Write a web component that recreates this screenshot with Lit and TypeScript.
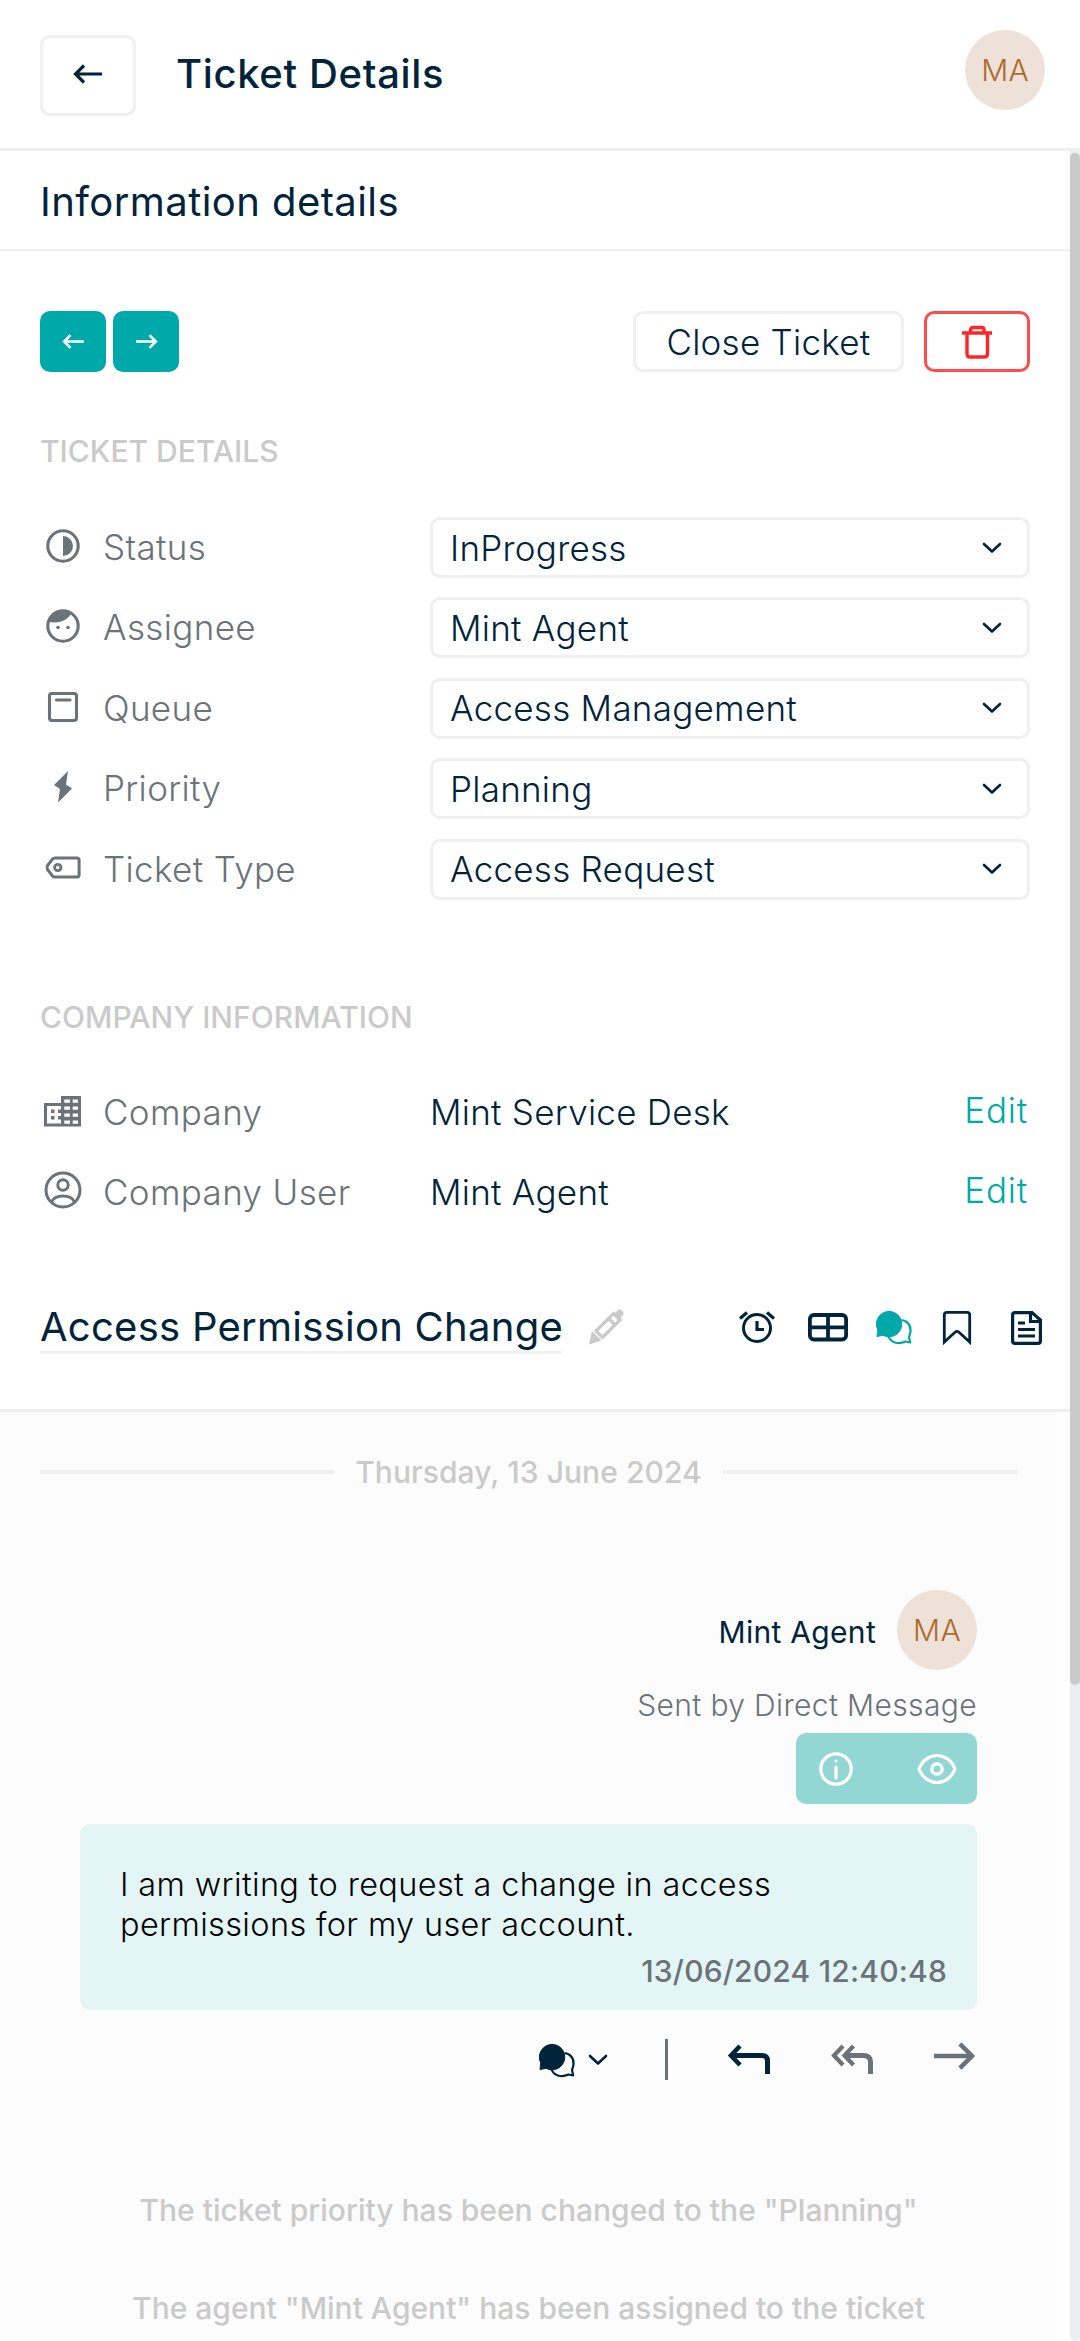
import { LitElement, html, css, svg } from "lit";
import { customElement } from "lit/decorators.js";

const arrow = (w: number, h: number, sw: number, flip = false) => html`<svg width=${w} height=${h} viewBox="0 0 28 20" fill="none" stroke="currentColor" stroke-width=${sw}>
  ${flip ? svg`<path d="M0 10H26M18 1.500L26.500 10L18 18.500"/>` : svg`<path d="M28 10H2M10 1.500L1.500 10L10 18.500"/>`}</svg>`;
const chevron = html`<svg class="chevron" width="20" height="12" viewBox="0 0 20 12" fill="none" stroke="currentColor" stroke-width="2.600" stroke-linecap="round" stroke-linejoin="round"><path d="M2 2L10 9.500L18 2"/></svg>`;
const bubbles = html`<svg class="bubbles" width="36" height="34" viewBox="0 0 36 34" fill="none">
  <path d="M25.500 9C31 9.500 35 14 34.500 20C34.500 22.500 33.500 24.500 33 26L34.200 31.500L29.500 30.500C22 34 14.500 31.500 12 24.500" stroke="currentColor" stroke-width="2.200" stroke-linejoin="round"/>
  <path d="M1 25.500L1.800 19A12.700 12.700 0 1 1 7 24.300Z" fill="currentColor" stroke="currentColor" stroke-linejoin="round"/></svg>`;
const icons: Record<string, unknown> = {
  status: svg`<circle cx="20" cy="20" r="15.200" stroke="currentColor" stroke-width="3.100"/><path d="M20 10A10 10 0 0 1 20 30Z" fill="currentColor"/>`,
  face: svg`<circle cx="20" cy="20" r="15.200" stroke="currentColor" stroke-width="3.100"/><path d="M5 15.500C12 17.500 22 17 28 8C22 2.500 9 2.500 5 15.500Z" fill="currentColor"/><circle cx="15" cy="21.500" r="1.800" fill="currentColor"/><circle cx="25" cy="21.500" r="1.800" fill="currentColor"/>`,
  queue: svg`<rect x="6.500" y="6.500" width="27" height="27" rx="2.500" stroke="currentColor" stroke-width="3.100"/><path d="M13.500 13H27" stroke="currentColor" stroke-width="3.100" stroke-linecap="round"/>`,
  bolt: svg`<path d="M25 4L11 18L17 22L15 35.500L29 21.500L23 17.500Z" fill="currentColor"/>`,
  tag: svg`<path d="M12 9.900H34Q36.100 9.900 36.100 12V27Q36.100 29.100 34 29.100H12Q10.500 29.100 9.500 28L4.500 21.500Q3.500 19.500 4.500 17.500L9.500 11Q10.500 9.900 12 9.900Z" stroke="currentColor" stroke-width="3"/><circle cx="14.800" cy="19.500" r="3.200" stroke="currentColor" stroke-width="2.800"/>`,
  company: svg`<path fill="currentColor" fill-rule="evenodd" d="M1 12H18V5H38V35.500H1ZM4 15V32.500H18V28.500H15V25H18V22H15V18.500H18V15ZM21.300 8.500V11.800H27V8.500ZM29.700 8.500V11.800H35V8.500ZM21.300 15.500V18.800H27V15.500ZM29.700 15.500V18.800H35V15.500ZM21.300 22.500V25.800H27V22.500ZM29.700 22.500V25.800H35V22.500ZM21.300 29.500V32.800H27V29.500ZM29.700 29.500V32.800H35V29.500Z"/><path fill="currentColor" d="M8 18.500H11.500V22H8ZM8 25H11.500V28.500H8Z"/>`,
  user: svg`<circle cx="20" cy="19" r="17" stroke="currentColor" stroke-width="3"/><circle cx="20" cy="14" r="5.200" stroke="currentColor" stroke-width="3"/><path d="M8.500 31C12 23 28 23 31.500 31" stroke="currentColor" stroke-width="3"/>`,
};
const icon = (name: string) => html`<svg class="row-icon" width="40" height="40" viewBox="0 0 40 40" fill="none">${icons[name]}</svg>`;

@customElement("app-root")
export class AppRoot extends LitElement {
  static styles = css`
    :host { display: block; height: 2341px; overflow: hidden; background: #fff; color: #02243b; font: 300 35px/40px Inter, "Liberation Sans", sans-serif; letter-spacing: .260px; }
    * { box-sizing: border-box; }
    svg { display: block; flex: none; overflow: visible; }
    button { font: inherit; letter-spacing: inherit; color: inherit; background: #fff; border: 3px solid #eff0f2; border-radius: 10px; padding: 0; display: flex; align-items: center; justify-content: center; }
    .top { height: 151px; border-bottom: 3px solid #eeefef; display: flex; align-items: flex-start; padding: 30px 35px 0 40px; }
    .back { width: 96px; height: 81px; margin-top: 5px; }
    .back svg { margin-top: -3px; }
    h1 { margin: 24px auto 0 40px; font-weight: 500; font-size: 40px; line-height: 40px; letter-spacing: .650px; }
    .avatar { width: 80px; height: 80px; border-radius: 50%; background: #eee1d8; color: #ad6a30; font-size: 30px; display: flex; align-items: center; justify-content: center; flex: none; }
    .body { display: flex; height: 2190px; }
    main { width: 1070px; }
    .rail { width: 10px; background: #ebedef; border-radius: 0 0 5px 5px; padding-top: 2px; }
    .thumb { height: 1532px; background: #cacaca; border-radius: 5px; }
    h2 { margin: 0; height: 100px; border-bottom: 2px solid #eeefef; padding: 31px 40px 0; font-weight: 400; font-size: 40px; line-height: 40px; letter-spacing: .430px; }
    .actions { display: flex; padding: 60px 40px 0; height: 121px; }
    .actions button { height: 61px; }
    .actions .nav { width: 66px; border: 0; background: #00a9a9; color: #fff; margin-right: 7px; }
    .actions .close { width: 271px; margin-left: auto; margin-right: 20px; }
    .actions .delete { width: 106px; border-color: #ff4b4e; color: #ff2427; }
    h3 { margin: 0; padding-left: 40px; font-weight: 500; font-size: 30px; line-height: 40px; color: #cacaca; letter-spacing: 0; }
    .ticket-title { padding-top: 59px; height: 145px; }
    .company-title { padding-top: 78px; }
    .row { height: 80.400px; padding: 0 40px; display: flex; align-items: flex-start; }
    .row-icon { color: #6b7378; margin: 9px 0 0 3px; }
    .label { width: 347px; margin-top: 10px; padding-left: 20px; color: #6b7378; letter-spacing: .350px; }
    .select { width: 600px; height: 61px; border: 3px solid #eff0f2; border-radius: 10px; display: flex; align-items: center; justify-content: space-between; padding: 0 25px 0 17px; }
    .fields { height: 402px; }
    .company { padding-top: 45px; height: 206px; }
    .value { margin-top: 10px; }
    .edit { margin: 8px 2px 0 auto; color: #00a9a9; letter-spacing: .800px; }
    .subject { height: 169px; display: flex; align-items: flex-start; padding: 60px 28px 0 40px; border-bottom: 3px solid #eeefef; }
    .subject-text { width: 522px; white-space: nowrap; font-size: 40px; font-weight: 400; line-height: 48px; height: 51px; border-bottom: 3px solid #f0f1f1; }
    .pencil { margin: 6px auto 0 27px; color: #cacaca; }
    .tools { display: flex; padding-top: 8px; }
    .teal { color: #00a9a9; }
    .feed { width: 1057px; height: 929px; background: #fcfcfc; padding: 40px 40px 0; }
    .day { display: flex; align-items: center; gap: 21px; color: #cacaca; font-size: 30px; font-weight: 500; white-space: nowrap; letter-spacing: .070px; }
    .rule { height: 4px; background: #efefef; flex: 1; }
    .message { width: 897px; margin: 98px 0 0 40px; display: flex; flex-direction: column; align-items: flex-end; }
    .author { display: flex; align-items: center; gap: 21px; font-size: 30px; font-weight: 400; letter-spacing: .300px; }
    .author .name { padding-top: 3px; }
    .author .avatar { font-weight: 300; }
    .sent { font-size: 30px; color: #6b7378; margin-top: 15px; height: 48px; letter-spacing: .370px; }
    .meta { width: 181px; height: 71px; border-radius: 10px; background: #93d7d5; color: #fff; display: flex; align-items: center; justify-content: space-between; padding: 0 20px 0 23px; }
    .bubble { width: 897px; height: 186px; margin-top: 20px; background: #e4f5f5; border-radius: 10px; padding: 41px 30px 0 40px; color: #050505; font-size: 32.500px; letter-spacing: .350px; }
    .time { text-align: right; font-size: 30px; font-weight: 500; color: #6b7378; margin-top: 6px; letter-spacing: .200px; }
    .reply { display: flex; align-items: flex-start; padding-top: 29px; height: 128px; margin-right: 2px; }
    .reply .bubbles { margin-top: 5px; }
    .reply .chevron { margin: 15px 0 0 13px; }
    .divider { width: 3px; height: 41px; background: #6b7378; margin: 0 60px 0 57px; }
    .curved { margin: 5px 61px 0 0; }
    .forward { margin-top: 3px; }
    .gray { color: #6b7378; }
    .notice { text-align: center; color: #cacaca; font-size: 30px; font-weight: 500; margin-top: 52px; height: 46px; letter-spacing: 0; }
  `;

  render() {
    const fields = [["status", "Status", "InProgress"], ["face", "Assignee", "Mint Agent"], ["queue", "Queue", "Access Management"], ["bolt", "Priority", "Planning"], ["tag", "Ticket Type", "Access Request"]];
    const company = [["company", "Company", "Mint Service Desk"], ["user", "Company User", "Mint Agent"]];
    return html`
      <header class="top">
        <button class="back">${arrow(28, 20, 3.2)}</button>
        <h1>Ticket Details</h1>
        <div class="avatar">MA</div>
      </header>
      <div class="body">
        <main>
          <h2>Information details</h2>
          <div class="actions">
            <button class="nav">${arrow(21, 15, 3.3)}</button>
            <button class="nav">${arrow(21, 15, 3.3, true)}</button>
            <button class="close">Close Ticket</button>
            <button class="delete"><svg width="30" height="34" viewBox="0 0 30 34" fill="none" stroke="currentColor" stroke-width="3.400" stroke-linejoin="round"><path d="M0 8H30M5 8V29Q5 32 8 32H22Q25.500 32 25.500 29V8M8.500 8V5Q8.500 2.500 11 2.500H19.500Q22 2.500 22 5V8"/></svg></button>
          </div>
          <h3 class="ticket-title">TICKET DETAILS</h3>
          <div class="fields">${fields.map(([i, l, v]) => html`<div class="row">${icon(i)}<span class="label">${l}</span><div class="select">${v}${chevron}</div></div>`)}</div>
          <h3 class="company-title">COMPANY INFORMATION</h3>
          <div class="company">${company.map(([i, l, v]) => html`<div class="row">${icon(i)}<span class="label">${l}</span><span class="value">${v}</span><span class="edit">Edit</span></div>`)}</div>
          <div class="subject">
            <span class="subject-text">Access Permission Change</span>
            <svg class="pencil" width="35" height="36" viewBox="0 0 35 36" fill="none"><path d="M0 35.500L3 22L12.500 31.500ZM25 5L29 1Q30.500 -.5 32 1L34 3Q35.500 4.500 34 6L30 11Z" fill="currentColor"/><path d="M7 22L24.500 4.500L31 11L13.500 28.500ZM19.500 9.500L26 16" stroke="currentColor" stroke-width="3.300"/></svg>
            <div class="tools">
              <svg width="69" height="34" viewBox="0 0 69 34" fill="none" stroke="currentColor" stroke-width="3"><circle cx="18" cy="17" r="13.500"/><path d="M18 10V18.500H25M1 7.500L8 1.500M28 1.500L35 7.500" stroke-width="3.200"/></svg>
              <svg width="68" height="34" viewBox="0 0 68 34" fill="none" stroke="currentColor" stroke-width="3.800"><rect x="1.900" y="4" width="36.200" height="24.500" rx="4"/><path d="M20 4V29M2 16.300H38"/></svg>
              <span class="teal">${bubbles}</span>
              <svg width="99" height="34" viewBox="-31 0 99 34" fill="none" stroke="currentColor" stroke-width="2.800"><path d="M1.300 31V4Q1.300 1.300 4 1.300H24Q26.700 1.300 26.700 4V31L16 21.200Q14 19.500 12 21.200Z"/></svg>
              <svg width="31" height="34" viewBox="0 0 31 34" fill="none" stroke="currentColor" stroke-width="3.200"><path d="M4 1.600H21L29.400 9V30Q29.400 32.400 27 32.400H4Q1.600 32.400 1.600 30V4Q1.600 1.600 4 1.600ZM19.500 1.500V10.500H29M7 12H14M7 18.500H24M7 25H24"/></svg>
            </div>
          </div>
          <section class="feed">
            <div class="day"><span class="rule"></span>Thursday, 13 June 2024<span class="rule"></span></div>
            <article class="message">
              <div class="author"><span class="name">Mint Agent</span><div class="avatar">MA</div></div>
              <div class="sent">Sent by Direct Message</div>
              <div class="meta">
                <svg width="34" height="34" viewBox="0 0 34 34" fill="none" stroke="currentColor" stroke-width="3.200" stroke-linecap="round"><circle cx="17" cy="17" r="15.200"/><path d="M17 15V26M17 9V9.100"/></svg>
                <svg width="40" height="32" viewBox="0 0 40 32" fill="none" stroke="currentColor" stroke-width="3.200"><path d="M2 16C9-2 31-2 38 16C31 34 9 34 2 16Z"/><circle cx="20" cy="16" r="5.200"/></svg>
              </div>
              <div class="bubble">I am writing to request a change in access permissions for my user account.<div class="time">13/06/2024 12:40:48</div></div>
              <div class="reply">
                ${bubbles}${chevron}<span class="divider"></span>
                <svg class="curved" width="42" height="30" viewBox="0 0 42 30" fill="none" stroke="currentColor" stroke-width="5"><path d="M4 11.500H34Q39.500 11.500 39.500 17V30"/><path d="M12 2L3 11.500L12 21" stroke-width="4.600"/></svg>
                <svg class="curved gray" width="42" height="30" viewBox="0 0 42 30" fill="none" stroke="currentColor" stroke-width="5"><path d="M14 11.500H32Q39.500 11.500 39.500 18V30"/><path d="M12 2L3 11.500L12 21M22.500 2L13.500 11.500L22.500 21" stroke-width="4.200"/></svg>
                <svg class="forward gray" width="41" height="28" viewBox="0 0 42 28" fill="none" stroke="currentColor" stroke-width="4.600"><path d="M0 14H38M26.500 1.500L39 14L26.500 26.500"/></svg>
              </div>
            </article>
            <div class="notice">The ticket priority has been changed to the "Planning"</div>
            <div class="notice">The agent "Mint Agent" has been assigned to the ticket</div>
          </section>
        </main>
        <div class="rail"><div class="thumb"></div></div>
      </div>`;
  }
}
